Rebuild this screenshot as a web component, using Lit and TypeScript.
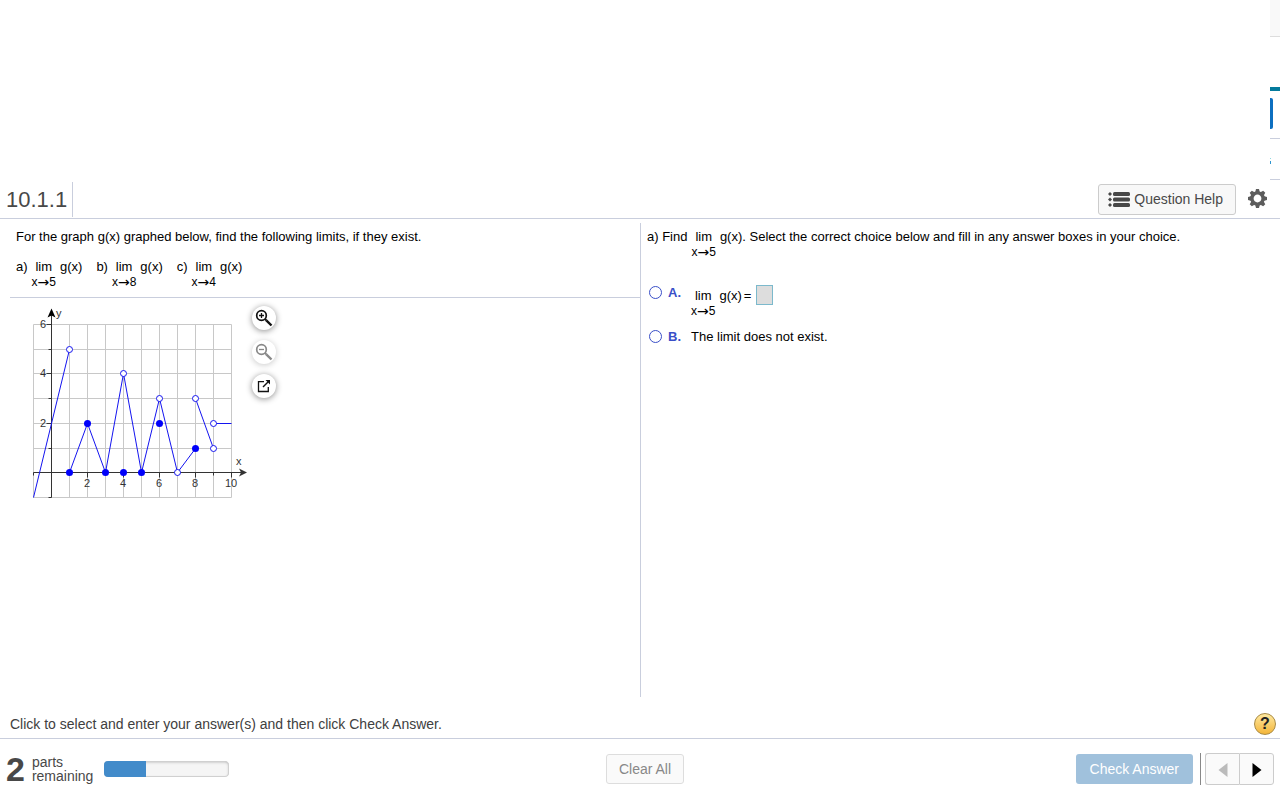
import { LitElement, html, css, svg } from "lit";
import { customElement, property } from "lit/decorators.js";

/** A limit operator with its subscript, followed by the function name. */
@customElement("math-limit")
class MathLimit extends LitElement {
  @property() to = "";

  static styles = css`
    :host {
      display: inline-grid;
      grid-template-columns: auto auto;
      column-gap: 4px;
      vertical-align: top;
      line-height: 16px;
    }
    .op {
      text-align: center;
    }
    .sub {
      display: flex;
      font-size: 12px;
      line-height: 15px;
      grid-row: 2;
    }
    .arrow {
      font-family: "DejaVu Sans", sans-serif;
      font-size: 14px;
    }
  `;

  render() {
    return html`<span class="op">lim</span><span>g(x)</span
      ><span class="sub">x<span class="arrow">→</span>${this.to}</span>`;
  }
}

type Point = [number, number];

/** Graph of the piecewise function g. */
@customElement("limit-graph")
class LimitGraph extends LitElement {
  static styles = css`
    :host {
      display: block;
    }
    svg {
      display: block;
    }
    .grid {
      stroke: #c8c8c8;
    }
    .axis {
      stroke: #333;
    }
    .curve {
      stroke: #1414f0;
      fill: none;
    }
    .open {
      fill: #fff;
      stroke: #1414f0;
    }
    .closed {
      fill: #0000fa;
    }
    text {
      font: 11px "Liberation Sans", Arial, sans-serif;
      fill: #333;
    }
  `;

  private px = (x: number) => 21.5 + 18 * x;
  private py = (y: number) => Math.round(167.25 - 24.7 * y) + 0.5;

  private lines: Point[][] = [
    [[-1, -1], [1, 5]],
    [[1, 0], [2, 2], [3, 0], [4, 4], [5, 0], [6, 3], [7, 0], [8, 1]],
    [[8, 3], [9, 1]],
    [[9, 2], [10, 2]],
  ];
  private open: Point[] = [[1, 5], [4, 4], [6, 3], [7, 0], [8, 3], [9, 1], [9, 2]];
  private closed: Point[] = [[1, 0], [2, 2], [3, 0], [4, 0], [5, 0], [6, 2], [8, 1]];

  render() {
    const { px, py } = this;
    const xs = Array.from({ length: 12 }, (_, i) => i - 1);
    const ys = Array.from({ length: 8 }, (_, i) => i - 1);
    return html`<svg width="220" height="196" role="img" aria-label="Graph of g(x)">
      ${xs.map((x) => svg`<line class="grid" x1=${px(x)} x2=${px(x)} y1=${py(6)} y2=${py(-1)} />`)}
      ${ys.map((y) => svg`<line class="grid" x1=${px(-1)} x2=${px(10)} y1=${py(y)} y2=${py(y)} />`)}
      <line class="axis" x1=${px(-1)} x2="212" y1=${py(0)} y2=${py(0)} />
      <line class="axis" x1=${px(0)} x2=${px(0)} y1="8" y2=${py(-1)} />
      <path d="M21.5 3.5L25.5 12.5L21.5 10.5L17.5 12.5Z" fill="#000" />
      <path d="M217 167.5L209 163.500L211 167.500L209 171.500Z" fill="#333" />
      ${xs.map((x) => svg`<line class="axis" x1=${px(x)} x2=${px(x)} y1=${py(0)} y2=${py(0) + (x > 0 && x % 2 === 0 ? 5 : 3)} />`)}
      ${ys.map((y) => svg`<line class="axis" x1=${px(0) - (y > 0 && y % 2 === 0 ? 5 : 3)} x2=${px(0)} y1=${py(y)} y2=${py(y)} />`)}
      ${[2, 4, 6, 8, 10].map((n) => svg`<text x=${px(n) - 0.5} y="182" text-anchor="middle">${n}</text>`)}
      ${[2, 4, 6].map((n) => svg`<text x="16" y=${py(n) + 3.5} text-anchor="end">${n}</text>`)}
      <text x="26" y="12">y</text>
      <text x="206" y="160">x</text>
      ${this.lines.map((l) => svg`<polyline class="curve" points=${l.map(([x, y]) => `${px(x)},${py(y)}`).join(" ")} />`)}
      ${this.closed.map(([x, y]) => svg`<circle class="closed" cx=${px(x)} cy=${py(y)} r="3.5" />`)}
      ${this.open.map(([x, y]) => svg`<circle class="open" cx=${px(x)} cy=${py(y)} r="3" />`)}
    </svg>`;
  }
}

@customElement("app-root")
class AppRoot extends LitElement {
  static styles = css`
    :host {
      display: flex;
      flex-direction: column;
      min-height: 100vh;
      background: #fff;
      color: #000;
      font: 13px/16px "Liberation Sans", Arial, sans-serif;
    }
    * {
      box-sizing: border-box;
    }
    button {
      font: inherit;
      margin: 0;
      padding: 0;
      cursor: pointer;
    }
    .top {
      display: flex;
      justify-content: flex-end;
    }
    .edge {
      width: 10px;
      display: flex;
      flex-direction: column;
    }
    .edge-bar {
      height: 37px;
      background: #f9f9f9;
      border-bottom: 1px solid #ddd;
    }
    .edge-tab {
      height: 54px;
      border-bottom: 4px solid #047a9c;
    }
    .edge-action {
      height: 48px;
      padding: 7px 0 9px;
      border-bottom: 1px solid #c9cedd;
    }
    .edge-action span {
      display: block;
      width: 3px;
      height: 31px;
      border-radius: 0 2px 2px 0;
      background: #0d6fc0;
    }
    .edge-link {
      height: 41px;
      padding-top: 19px;
      border-bottom: 1px solid #c9cedd;
    }
    .edge-link span {
      display: block;
      height: 6px;
      width: 1px;
      background: linear-gradient(#8fd8e0 1px, #fff 1px 3px, #2f96d0 3px);
    }
    .head {
      display: flex;
      align-items: center;
      height: 39px;
      border-bottom: 1px solid #c9cedd;
      color: #484848;
    }
    h1 {
      margin: 0;
      padding: 0 5px 0 6px;
      border-right: 1px solid #c9cedd;
      font-size: 22px;
      font-weight: 400;
      line-height: 35px;
    }
    .help {
      display: flex;
      align-items: center;
      gap: 4px;
      height: 31px;
      margin-left: auto;
      padding: 0 12px 0 9px;
      border: 1px solid #ccc;
      border-radius: 3px;
      background: #f8f8f8;
      color: #484848;
      font-size: 14px;
    }
    .gear {
      margin: 0 13px 2px 12px;
      border: 0;
      background: none;
      height: 22px;
    }
    .gear svg {
      display: block;
    }
    .work {
      flex: 1;
      display: grid;
      grid-template-columns: 1fr 1fr;
      padding-top: 4px;
    }
    .limits {
      display: flex;
      gap: 14px;
      margin-top: 14px;
    }
    .limit {
      display: flex;
      gap: 4px;
    }
    .question {
      padding: 6px 16px 7px 6px;
      margin-left: 10px;
      border-bottom: 1px solid #c9cedd;
    }
    p {
      margin: 0;
    }
    .figure {
      display: flex;
      gap: 2px;
      padding: 7px 0 0 30px;
    }
    .tools {
      display: flex;
      flex-direction: column;
      gap: 10px;
      padding-top: 1px;
    }
    .tool {
      display: grid;
      place-items: center;
      width: 24px;
      height: 24px;
      border: 0;
      border-radius: 50%;
      background: #fff;
      box-shadow: 0 1px 6px rgba(0, 0, 0, 0.45);
      color: #111;
    }
    .tool:disabled {
      color: #888;
      box-shadow: 0 1px 6px rgba(0, 0, 0, 0.22);
    }
    .answer {
      border-left: 1px solid #c9cedd;
      padding: 6px 6px 0;
    }
    .prompt {
      display: flex;
      gap: 4px;
    }
    .choices {
      display: grid;
      grid-template-columns: 13px 14px 1fr;
      column-gap: 6px;
      row-gap: 10px;
      margin: 25px 0 0;
      padding: 0 0 0 2px;
      border: 0;
    }
    .choices input[type="radio"] {
      appearance: none;
      width: 13px;
      height: 13px;
      margin: 1px 0 0;
      border: 1px solid #3a4fc8;
      border-radius: 50%;
      background: #fff;
    }
    .choices input[type="radio"]:checked {
      background: radial-gradient(#3a4fc8 40%, #fff 45%);
    }
    .letter {
      color: #3a4fc8;
      font-weight: 700;
    }
    .choice {
      display: flex;
      padding-left: 3px;
    }
    .choice.eq {
      gap: 2px;
      padding-top: 3px;
    }
    .blank {
      width: 17px;
      height: 20px;
      margin: -3px 0 0 3px;
      padding: 0;
      border: 1px solid #7cb9cc;
      border-radius: 0;
      background: #ddd;
      font: inherit;
    }
    .hint {
      display: flex;
      align-items: center;
      justify-content: space-between;
      height: 42px;
      padding: 13px 4px 0 10px;
      border-bottom: 1px solid #c9cedd;
      color: #404040;
      font-size: 14px;
    }
    .info {
      width: 22px;
      height: 22px;
      border: 1px solid #a98b45;
      border-radius: 50%;
      background: linear-gradient(#ffe9a0, #f3b53a);
      color: #222;
      font-size: 16px;
      font-weight: 700;
      line-height: 20px;
    }
    footer {
      display: grid;
      grid-template-columns: 1fr auto 1fr;
      align-items: center;
      height: 61px;
      padding: 0 6px 2px;
      color: #484848;
    }
    .status {
      display: flex;
      align-items: center;
    }
    .count {
      font-size: 34px;
      font-weight: 700;
      line-height: 34px;
    }
    .left {
      width: 66px;
      margin: 0 6px 0 7px;
      font-size: 14px;
      line-height: 14px;
    }
    progress {
      appearance: none;
      display: block;
      width: 125px;
      height: 16px;
      border: 0;
      border-radius: 4px;
      overflow: hidden;
    }
    progress::-webkit-progress-bar {
      border-radius: 4px;
      background: #f5f5f5;
      box-shadow: inset 0 0 0 1px #d0d0d0, inset 0 1px 3px rgba(0, 0, 0, 0.3);
    }
    progress::-webkit-progress-value {
      background: #428bca;
    }
    .clear {
      height: 30px;
      margin-left: 10px;
      padding: 0 12px;
      border: 1px solid #ddd;
      border-radius: 3px;
      background: #fafafa;
      color: #888;
      font-size: 14px;
    }
    .actions {
      display: flex;
      align-items: center;
      justify-content: flex-end;
    }
    .check {
      height: 30px;
      padding: 0 14px;
      border: 0;
      border-radius: 3px;
      background: #a0c1dc;
      color: #fff;
      font-size: 14px;
    }
    .pager {
      display: flex;
      margin-left: 7px;
      padding-left: 4px;
      border-left: 1px solid #888;
    }
    .pager button {
      display: grid;
      place-items: center;
      width: 35px;
      height: 32px;
      padding-top: 2px;
      border: 1px solid #ccc;
      background: #fafafa;
      color: #000;
    }
    .pager button:first-child {
      width: 34px;
      border-radius: 3px 0 0 3px;
      border-right: 0;
      color: #bbb;
    }
    .pager button:last-child {
      border-radius: 0 3px 3px 0;
    }
  `;

  private lens(sign: string) {
    return html`<svg width="18" height="18" viewBox="0 0 18 18" fill="none" stroke="currentColor">
      <circle cx="6.500" cy="6.500" r="4.800" stroke-width="1.700" />
      <path d="M10 10L11.500 11.500" stroke-width="1.800" />
      <path d="M11.300 11.300L16.500 16.500" stroke-width="2.400" />
      <path d=${sign} stroke-width="1.300" />
    </svg>`;
  }

  render() {
    const parts = [["a)", "5"], ["b)", "8"], ["c)", "4"]];
    return html`
      <div class="top">
        <div class="edge">
          <div class="edge-bar"></div>
          <div class="edge-tab"></div>
          <div class="edge-action"><span></span></div>
          <div class="edge-link"><span></span></div>
        </div>
      </div>
      <header class="head">
        <h1>10.1.1</h1>
        <button class="help">
          <svg width="22" height="15" viewBox="0 0 22 15" fill="#484848" aria-hidden="true">
            ${[2, 7.5, 13].map(
              (y) => svg`<path d="M2 ${y - 2}L4 ${y}L2 ${y + 2}L0 ${y}Z" />
                <rect x="5" y=${y - 2} width="17" height="4" rx="1.500" />`
            )}
          </svg>
          <span>Question Help</span>
        </button>
        <button class="gear" aria-label="Settings">
          <svg width="19" height="19" viewBox="-9.5 -9.5 19 19" fill="#5c5c5c">
            ${[0, 45, 90, 135, 180, 225, 270, 315].map(
              (a) => svg`<path d="M-2.400 -6L-1.500 -9.500H1.500L2.400 -6Z" transform="rotate(${a})" />`
            )}
            <circle r="5.600" fill="none" stroke="#5c5c5c" stroke-width="3.400" />
          </svg>
        </button>
      </header>
      <main class="work">
        <section>
          <div class="question">
            <p>For the graph g(x) graphed below, find the following limits, if they exist.</p>
            <div class="limits">
              ${parts.map(
                ([label, to]) => html`<div class="limit">
                  <span>${label}</span><math-limit to=${to}></math-limit>
                </div>`
              )}
            </div>
          </div>
          <div class="figure">
            <limit-graph></limit-graph>
            <div class="tools">
              <button class="tool" aria-label="Zoom in">${this.lens("M4 6.5H9M6.500 4V9")}</button>
              <button class="tool" aria-label="Zoom out" disabled>${this.lens("M4 6.5H9")}</button>
              <button class="tool" aria-label="Open in a new window">
                <svg width="14" height="14" viewBox="0 0 14 14" fill="none" stroke="currentColor">
                  <path d="M7 2.700H1.500V12.500H11.300V8" stroke-width="1.300" />
                  <path d="M6 8L11 3" stroke-width="1.500" />
                  <path d="M8.500 1H13V5.500Z" fill="currentColor" stroke="none" />
                </svg>
              </button>
            </div>
          </div>
        </section>
        <section class="answer">
          <div class="prompt">
            <span>a) Find</span>
            <div><math-limit to="5"></math-limit>. Select the correct choice below and fill in any answer boxes in your choice.</div>
          </div>
          <fieldset class="choices">
            <input type="radio" name="choice" id="a" />
            <label class="letter" for="a">A.</label>
            <div class="choice eq">
              <math-limit to="5"></math-limit><span>=</span>
              <input class="blank" type="text" aria-label="Value of the limit" />
            </div>
            <input type="radio" name="choice" id="b" />
            <label class="letter" for="b">B.</label>
            <label class="choice" for="b">The limit does not exist.</label>
          </fieldset>
        </section>
      </main>
      <div class="hint">
        <span>Click to select and enter your answer(s) and then click Check Answer.</span>
        <button class="info" aria-label="Help">?</button>
      </div>
      <footer>
        <div class="status">
          <span class="count">2</span>
          <label class="left" for="done">parts remaining</label>
          <progress id="done" max="3" value="1"></progress>
        </div>
        <button class="clear">Clear All</button>
        <div class="actions">
          <button class="check">Check Answer</button>
          <div class="pager">
            <button aria-label="Previous">
              <svg width="10" height="14"><path d="M9.500 0V14L0.500 7Z" fill="currentColor" /></svg>
            </button>
            <button aria-label="Next">
              <svg width="10" height="14"><path d="M0.500 0V14L9.500 7Z" fill="currentColor" /></svg>
            </button>
          </div>
        </div>
      </footer>
    `;
  }
}
